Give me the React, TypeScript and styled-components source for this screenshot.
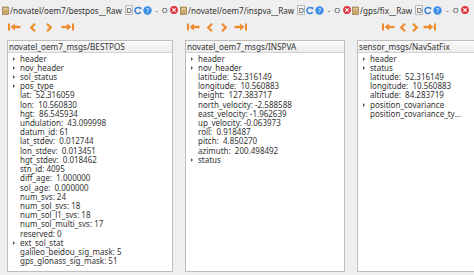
import * as React from "react";
import styled, { createGlobalStyle } from "styled-components";

interface Row {
    text: string;
    expand?: boolean;
}

interface PanelType {
    title: string;
    msg: string;
    width: number;
    navPad: number;
    navGap: number;
    open?: boolean;
    rows: Row[];
}

const r = (text: string, expand = false): Row => ({ text, expand });

const panels: PanelType[] = [
    {
        title: "/novatel/oem7/bestpos__Raw",
        msg: "novatel_oem7_msgs/BESTPOS",
        width: 178,
        navPad: 8,
        navGap: 8,
        rows: [
            r("header", true),
            r("nov_header", true),
            r("sol_status", true),
            r("pos_type", true),
            r("lat:  52.316059"),
            r("lon:  10.560830"),
            r("hgt:  86.545934"),
            r("undulation:  43.099998"),
            r("datum_id: 61"),
            r("lat_stdev:  0.012744"),
            r("lon_stdev:  0.013451"),
            r("hgt_stdev:  0.018462"),
            r("stn_id: 4095"),
            r("diff_age:  1.000000"),
            r("sol_age:  0.000000"),
            r("num_svs: 24"),
            r("num_sol_svs: 18"),
            r("num_sol_l1_svs: 18"),
            r("num_sol_multi_svs: 17"),
            r("reserved: 0"),
            r("ext_sol_stat", true),
            r("galileo_beidou_sig_mask: 5"),
            r("gps_glonass_sig_mask: 51"),
        ],
    },
    {
        title: "/novatel/oem7/inspva__Raw",
        msg: "novatel_oem7_msgs/INSPVA",
        width: 172,
        navPad: 9,
        navGap: 6,
        rows: [
            r("header", true),
            r("nov_header", true),
            r("latitude:  52.316149"),
            r("longitude:  10.560883"),
            r("height:  127.383717"),
            r("north_velocity: -2.588588"),
            r("east_velocity: -1.962639"),
            r("up_velocity: -0.063973"),
            r("roll:  0.918487"),
            r("pitch:  4.850270"),
            r("azimuth:  200.498492"),
            r("status", true),
        ],
    },
    {
        title: "/gps/fix__Raw",
        msg: "sensor_msgs/NavSatFix",
        width: 124,
        navPad: 32,
        navGap: 4,
        open: true,
        rows: [
            r("header", true),
            r("status", true),
            r("latitude:  52.316149"),
            r("longitude:  10.560883"),
            r("altitude:  84.283719"),
            r("position_covariance", true),
            r("position_covariance_type:  2"),
        ],
    },
];

const GlobalStyle = createGlobalStyle`
    body {
        margin: 0;
        background: #efefef;
        font-family: "Noto Sans", "DejaVu Sans", sans-serif;
        color: #333;
        overflow: hidden;
    }
`;

const Desk = styled.div`
    display: flex;
    height: 275px;
    width: 474px;
    overflow: hidden;
`;

const Window = styled.div<{ $w: number; $open?: boolean }>`
    flex: 0 0 ${(p) => p.$w}px;
    width: ${(p) => p.$w}px;
    display: flex;
    flex-direction: column;
    min-width: 0;
    padding: 0 ${(p) => (p.$open ? 0 : 5)}px 3px 7px;
    box-sizing: border-box;
`;

const TitleBar = styled.div<{ $open?: boolean }>`
    display: flex;
    align-items: center;
    height: 20px;
    margin: 0 ${(p) => (p.$open ? 5 : -5)}px 0 -6px;
    gap: 1px;
    white-space: nowrap;
`;

const TitleText = styled.span`
    font-size: 8.1px;
    color: #333;
    flex: none;
`;

const Spacer = styled.span`
    flex: 1;
`;

const DBox = styled.span`
    display: inline-flex;
    align-items: center;
    justify-content: center;
    width: 6px;
    height: 8px;
    font-size: 7.5px;
    border: 1px solid #b9b9b9;
    background: #f7f7f7;
    color: #444;
    margin-left: 2px;
    flex: none;
`;

const WinCtl = styled.span`
    font-size: 7.5px;
    color: #444;
    margin: 0 1.5px;
    flex: none;
`;

const NavBar = styled.div<{ $pad: number; $gap: number }>`
    display: flex;
    align-items: center;
    height: 14px;
    padding-left: ${(p) => p.$pad - 7}px;
    gap: ${(p) => p.$gap}px;
    margin-bottom: 6px;
`;

const Tree = styled.div<{ $open?: boolean }>`
    flex: 1;
    display: flex;
    flex-direction: column;
    background: #fff;
    border: 1px solid #bdbdbd;
    border-right: ${(p) => (p.$open ? "none" : "1px solid #bdbdbd")};
    min-width: 0;
    overflow: hidden;
`;

const HeadCell = styled.div`
    height: 11px;
    line-height: 11px;
    font-size: 8.2px;
    padding-left: 1px;
    border-bottom: 1px solid #d2d2d2;
    background: linear-gradient(#fafafa, #ececec);
    color: #333;
    white-space: nowrap;
`;

const List = styled.div`
    padding-top: 0.5px;
`;

const Item = styled.div`
    position: relative;
    height: 9.23px;
    font-size: 8px;
    padding: 0 10px 0 12px;
    color: #333;
`;

const ItemText = styled.span`
    display: block;
    line-height: 9.23px;
    padding-bottom: 3px;
    white-space: pre;
    overflow: hidden;
    text-overflow: ellipsis;
`;

const Arrow = styled.span`
    position: absolute;
    left: 5px;
    top: 3px;
    width: 0;
    height: 0;
    border-left: 2.5px solid #555;
    border-top: 2px solid transparent;
    border-bottom: 2px solid transparent;
`;

const FolderIcon: React.FC = () => (
    <svg width="7" height="9" viewBox="0 0 7 9" style={{ flex: "none", marginLeft: 1 }}>
        <rect x="0.5" y="1" width="6" height="7.5" fill="#c9a86a" stroke="#8a6d3b" strokeWidth="0.6" />
        <rect x="1.5" y="2.5" width="4" height="1" fill="#f3e4c4" />
    </svg>
);

const RefreshIcon: React.FC = () => (
    <svg width="8" height="9" viewBox="0 0 8 9" style={{ flex: "none" }}>
        <path d="M6.6 3 A3 3 0 1 0 6.6 6" fill="none" stroke="#3f86d6" strokeWidth="1.6" />
        <path d="M5 1.2 L7.6 1.4 L7 4 Z" fill="#3f86d6" />
    </svg>
);

const HelpIcon: React.FC = () => (
    <svg width="9" height="9" viewBox="0 0 9 9" style={{ flex: "none" }}>
        <circle cx="4.5" cy="4.5" r="4.2" fill="#3a8ee6" />
        <text x="4.5" y="7" fontSize="6.5" textAnchor="middle" fill="#fff" fontFamily="DejaVu Sans">?</text>
    </svg>
);

const CloseIcon: React.FC = () => (
    <svg width="8" height="8" viewBox="0 0 8 8" style={{ flex: "none" }}>
        <circle cx="4" cy="4" r="3.9" fill="#e0333f" />
        <path d="M2.4 2.4 L5.6 5.6 M5.6 2.4 L2.4 5.6" stroke="#fff" strokeWidth="1.2" />
    </svg>
);

const orange = "#ee8b2c";

const FirstIcon: React.FC = () => (
    <svg width="13" height="8" viewBox="0 0 13 8">
        <rect x="0" y="0.5" width="2" height="7" fill={orange} />
        <path d="M2.5 4 L7 0.5 L7 7.5 Z" fill={orange} />
        <rect x="6" y="2.8" width="6.5" height="2.4" fill={orange} />
    </svg>
);

const LastIcon: React.FC = () => (
    <svg width="13" height="8" viewBox="0 0 13 8">
        <rect x="11" y="0.5" width="2" height="7" fill={orange} />
        <path d="M10.5 4 L6 0.5 L6 7.5 Z" fill={orange} />
        <rect x="0.5" y="2.8" width="6.5" height="2.4" fill={orange} />
    </svg>
);

const PrevIcon: React.FC = () => (
    <svg width="8" height="9" viewBox="0 0 8 9">
        <path d="M6 0.8 L2.2 4.5 L6 8.2" fill="none" stroke={orange} strokeWidth="2.2" />
    </svg>
);

const NextIcon: React.FC = () => (
    <svg width="8" height="9" viewBox="0 0 8 9">
        <path d="M2 0.8 L5.8 4.5 L2 8.2" fill="none" stroke={orange} strokeWidth="2.2" />
    </svg>
);

const Panel: React.FC<{ p: PanelType }> = ({ p }) => {
    return (
        <Window $w={p.width} $open={p.open}>
            <TitleBar $open={p.open}>
                <FolderIcon />
                <TitleText>{p.title}</TitleText>
                <DBox>D</DBox>
                <RefreshIcon />
                <HelpIcon />
                <Spacer />
                <WinCtl>-</WinCtl>
                <WinCtl>O</WinCtl>
                <CloseIcon />
            </TitleBar>
            <NavBar $pad={p.navPad} $gap={p.navGap}>
                <FirstIcon />
                <PrevIcon />
                <NextIcon />
                <LastIcon />
            </NavBar>
            <Tree $open={p.open}>
                <HeadCell>{p.msg}</HeadCell>
                <List>
                    {p.rows.map((row, i) => (
                        <Item key={i}>
                            {row.expand && <Arrow />}
                            <ItemText>{row.text}</ItemText>
                        </Item>
                    ))}
                </List>
            </Tree>
        </Window>
    );
};

const App: React.FC = () => {
    return (
        <>
            <GlobalStyle />
            <Desk>
                {panels.map((p) => (
                    <Panel key={p.msg} p={p} />
                ))}
            </Desk>
        </>
    );
};

export default App;
